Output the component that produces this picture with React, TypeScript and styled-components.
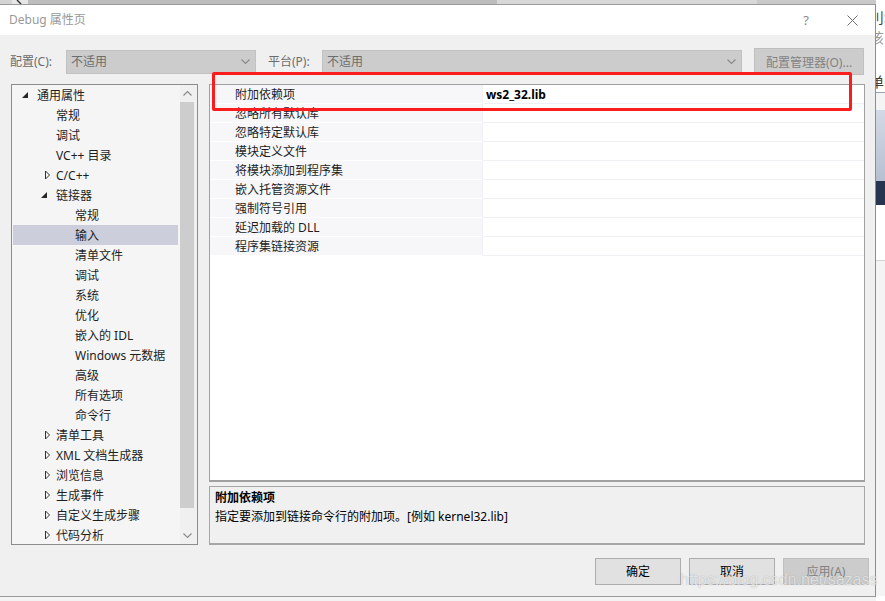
import React from "react";
import styled, { createGlobalStyle } from "styled-components";

const GlobalStyle = createGlobalStyle`
	html, body {
		margin: 0;
		padding: 0;
		background: #ffffff;
	}
	body {
		font-family: "Noto Sans", "Noto Sans CJK SC", sans-serif;
		font-size: 12px;
		color: #1e1e1e;
	}
	* {
		box-sizing: border-box;
	}
`;

const TREE = [
	{ label: "通用属性", level: 0, arrow: "open" },
	{ label: "常规", level: 1 },
	{ label: "调试", level: 1 },
	{ label: "VC++ 目录", level: 1 },
	{ label: "C/C++", level: 1, arrow: "closed" },
	{ label: "链接器", level: 1, arrow: "open" },
	{ label: "常规", level: 2 },
	{ label: "输入", level: 2, selected: true },
	{ label: "清单文件", level: 2 },
	{ label: "调试", level: 2 },
	{ label: "系统", level: 2 },
	{ label: "优化", level: 2 },
	{ label: "嵌入的 IDL", level: 2 },
	{ label: "Windows 元数据", level: 2 },
	{ label: "高级", level: 2 },
	{ label: "所有选项", level: 2 },
	{ label: "命令行", level: 2 },
	{ label: "清单工具", level: 1, arrow: "closed" },
	{ label: "XML 文档生成器", level: 1, arrow: "closed" },
	{ label: "浏览信息", level: 1, arrow: "closed" },
	{ label: "生成事件", level: 1, arrow: "closed" },
	{ label: "自定义生成步骤", level: 1, arrow: "closed" },
	{ label: "代码分析", level: 1, arrow: "closed" },
];

const PROPS = [
	{ name: "附加依赖项", value: "ws2_32.lib" },
	{ name: "忽略所有默认库", value: "" },
	{ name: "忽略特定默认库", value: "" },
	{ name: "模块定义文件", value: "" },
	{ name: "将模块添加到程序集", value: "" },
	{ name: "嵌入托管资源文件", value: "" },
	{ name: "强制符号引用", value: "" },
	{ name: "延迟加载的 DLL", value: "" },
	{ name: "程序集链接资源", value: "" },
];

const Chevron = ({ up = false }: { up?: boolean }) => (
	<svg width="9" height="5" viewBox="0 0 9 5">
		<polyline
			points={up ? "0.5,4.5 4.5,0.5 8.5,4.5" : "0.5,0.5 4.5,4.5 8.5,0.5"}
			fill="none"
			stroke="#8a8a8a"
			strokeWidth="1.1"
		/>
	</svg>
);

const TreeArrow = ({ kind }: { kind?: string }) => {
	if (!kind) return null;
	return (
		<svg width="10" height="10" viewBox="0 0 10 10">
			{kind === "open" ? (
				<polygon points="6,2 6,8 0,8" fill="#262626" />
			) : (
				<polygon
					points="4.5,1 8.5,5 4.5,9"
					fill="none"
					stroke="#333"
					strokeWidth="1"
				/>
			)}
		</svg>
	);
};

const App = () => {
	return (
		<Screen>
			<GlobalStyle />
			<LeftSide>
				<TopStrip>
					<TopSeg $w={12} $bg="#d4d4d4" />
					<TopSeg $w={16} $bg="#e6e6e6">
						<svg width="16" height="4" viewBox="0 0 16 4">
							<line x1="5" y1="0" x2="9" y2="4" stroke="#333" strokeWidth="1.4" />
						</svg>
					</TopSeg>
					<TopSeg $w={469} $bg="#bdbdbd" />
					<TopSeg $w={260} $bg="#d8d8d8" />
					<TopSeg $w={119} $bg="#c9c9c9" />
				</TopStrip>
				<Dialog>
					<TitleBar>
						<TitleText>Debug 属性页</TitleText>
						<TitleButton>?</TitleButton>
						<TitleButton>
							<svg width="11" height="11" viewBox="0 0 11 11">
								<line x1="0.5" y1="0.5" x2="10.5" y2="10.5" stroke="#6f6f6f" strokeWidth="1" />
								<line x1="10.5" y1="0.5" x2="0.5" y2="10.5" stroke="#6f6f6f" strokeWidth="1" />
							</svg>
						</TitleButton>
					</TitleBar>
					<Body>
						<ConfigRow>
							<FieldLabel $w={56}>配置(C):</FieldLabel>
							<Combo $w={190}>
								<span>不适用</span>
								<Chevron />
							</Combo>
							<FieldLabel $w={54} $gap={12}>
								平台(P):
							</FieldLabel>
							<Combo $w={420}>
								<span>不适用</span>
								<Chevron />
							</Combo>
							<ManagerButton>配置管理器(O)...</ManagerButton>
						</ConfigRow>
						<Main>
							<Tree>
								<TreeList>
									{TREE.map((item, idx) => (
										<TreeRow
											key={idx}
											$level={item.level}
											$selected={!!item.selected}
										>
											<ArrowSlot>
												<TreeArrow kind={item.arrow} />
											</ArrowSlot>
											<TreeLabel>{item.label}</TreeLabel>
										</TreeRow>
									))}
								</TreeList>
								<ScrollBar>
									<ScrollArrow>
										<Chevron up />
									</ScrollArrow>
									<ScrollThumb />
									<ScrollTrack />
									<ScrollArrow>
										<Chevron />
									</ScrollArrow>
								</ScrollBar>
							</Tree>
							<RightCol>
								<Grid>
									{PROPS.map((p, idx) => (
										<PropRow key={idx}>
											<GutterCell />
											<NameCell>{p.name}</NameCell>
											<ValueCell $bold={!!p.value}>{p.value}</ValueCell>
										</PropRow>
									))}
								</Grid>
								<Desc>
									<DescTitle>附加依赖项</DescTitle>
									<DescText>指定要添加到链接命令行的附加项。[例如 kernel32.lib]</DescText>
								</Desc>
							</RightCol>
						</Main>
						<Footer>
							<DlgButton>确定</DlgButton>
							<DlgButton>取消</DlgButton>
							<DlgButton $disabled>应用(A)</DlgButton>
						</Footer>
					</Body>
				</Dialog>
				<BottomStrip />
			</LeftSide>
			<RightStrip>
				<StripText $color="#3a3a3a" $top={8}>刂S</StripText>
				<StripText $color="#9a9a9a" $top={0}>该</StripText>
				<StripBlock $h={24} $bg="#ffffff" />
				<StripText $color="#3a3a3a" $top={0}>单的</StripText>
				<StripBlock $h={1} $bg="#9aa3b0" />
				<StripBlock $h={17} $bg="#f4f4f4" />
				<StripGradient />
				<StripBlock $h={24} $bg="#26344f" />
				<StripBlock $h={55} $bg="#ffffff" />
				<StripBlock $h={1} $bg="#d2d2d2" />
				<StripBlock $h={335} $bg="#f4f4f4" />
			</RightStrip>
			<RedBox />
			<Watermark>https://blog.csdn.net/sazass</Watermark>
		</Screen>
	);
};

export default App;

const Screen = styled.div`
	position: relative;
	width: 885px;
	height: 601px;
	display: flex;
	overflow: hidden;
	background: #f0f0f0;
`;

const LeftSide = styled.div`
	width: 876px;
	display: flex;
	flex-direction: column;
`;

const TopStrip = styled.div`
	height: 4px;
	display: flex;
	background: #c6c6c6;
`;

const TopSeg = styled.div<{ $w: number; $bg: string }>`
	width: ${(p) => p.$w}px;
	height: 4px;
	background: ${(p) => p.$bg};
	display: flex;
	svg {
		display: block;
	}
`;

const Dialog = styled.div`
	height: 593px;
	display: flex;
	flex-direction: column;
	background: #f0f0f0;
	border-top: 1px solid #9b9b9b;
	border-right: 1px solid #8d8d8d;
	border-bottom: 1px solid #9b9b9b;
`;

const TitleBar = styled.div`
	height: 30px;
	display: flex;
	align-items: center;
	background: #ffffff;
	padding-left: 9px;
	color: #999999;
`;

const TitleText = styled.div`
	flex: 1;
	font-size: 12px;
	line-height: 16px;
`;

const TitleButton = styled.div`
	width: 46px;
	height: 30px;
	display: flex;
	align-items: center;
	justify-content: center;
	font-size: 13px;
	color: #8a8a8a;
`;

const Body = styled.div`
	flex: 1;
	display: flex;
	flex-direction: column;
	padding: 13px 0 11px 0;
`;

const ConfigRow = styled.div`
	height: 27px;
	display: flex;
	align-items: center;
	padding-left: 10px;
`;

const FieldLabel = styled.div<{ $w: number; $gap?: number }>`
	width: ${(p) => p.$w}px;
	margin-left: ${(p) => p.$gap || 0}px;
	color: #6d6d6d;
	line-height: 16px;
	white-space: nowrap;
`;

const Combo = styled.div<{ $w: number }>`
	width: ${(p) => p.$w}px;
	height: 24px;
	display: flex;
	align-items: center;
	justify-content: space-between;
	padding: 0 5px 0 4px;
	background: #cccccc;
	border: 1px solid #c2c2c2;
	color: #6d6d6d;
	line-height: 16px;
	svg {
		display: block;
	}
`;

const ManagerButton = styled.div`
	margin-left: 12px;
	width: 110px;
	height: 27px;
	display: flex;
	align-items: center;
	justify-content: center;
	background: #cccccc;
	border: 1px solid #bfbfbf;
	color: #838383;
	white-space: nowrap;
`;

const Main = styled.div`
	margin-top: 9px;
	height: 461px;
	display: grid;
	grid-template-columns: 187px 656px;
	column-gap: 11px;
	padding-left: 11px;
`;

const Tree = styled.div`
	display: flex;
	background: #f5f5f5;
	border: 1px solid #8c8c8c;
	overflow: hidden;
`;

const TreeList = styled.div`
	flex: 1;
	padding: 0 2px 0 1px;
	overflow: hidden;
`;

const TreeRow = styled.div<{ $level: number; $selected: boolean }>`
	height: 20px;
	display: flex;
	align-items: center;
	padding-left: ${(p) => 7 + p.$level * 19}px;
	background: ${(p) => (p.$selected ? "#cccedb" : "transparent")};
	white-space: nowrap;
	color: #1e1e1e;
`;

const TreeLabel = styled.span`
	line-height: 16px;
	padding-top: 2px;
`;

const ArrowSlot = styled.div`
	width: 17px;
	height: 20px;
	flex-shrink: 0;
	display: flex;
	align-items: center;
	padding-left: 2px;
	svg {
		display: block;
	}
`;

const ScrollBar = styled.div`
	width: 17px;
	display: flex;
	flex-direction: column;
	background: #f0f0f0;
`;

const ScrollArrow = styled.div`
	height: 17px;
	display: flex;
	align-items: center;
	justify-content: center;
	padding-right: 3px;
	svg {
		display: block;
	}
`;

const ScrollThumb = styled.div`
	height: 406px;
	margin-right: 3px;
	background: #cdcdcd;
`;

const ScrollTrack = styled.div`
	flex: 1;
`;

const RightCol = styled.div`
	display: flex;
	flex-direction: column;
	gap: 4px;
`;

const Grid = styled.div`
	height: 398px;
	background: #ffffff;
	border: 1px solid #a0a0a0;
	border-bottom-width: 2px;
`;

const PropRow = styled.div`
	height: 19px;
	display: grid;
	grid-template-columns: 21px 252px 1fr;
`;

const GutterCell = styled.div`
	background: #f7f7f9;
	border-bottom: 1px solid #ffffff;
`;

const NameCell = styled.div`
	padding: 2px 0 0 4px;
	background: #f7f7f9;
	border-bottom: 1px solid #ffffff;
	border-right: 1px solid #eef0f5;
	line-height: 16px;
	white-space: nowrap;
`;

const ValueCell = styled.div<{ $bold: boolean }>`
	padding: 2px 0 0 3px;
	border-bottom: 1px solid #eef0f5;
	font-weight: ${(p) => (p.$bold ? 700 : 400)};
	color: #000000;
	line-height: 16px;
`;

const Desc = styled.div`
	height: 59px;
	display: flex;
	flex-direction: column;
	padding: 1px 5px 0 5px;
	background: #f0f0f0;
	border: 1px solid #a6a6a6;
	border-bottom-width: 2px;
`;

const DescTitle = styled.div`
	font-weight: 700;
	line-height: 20px;
	color: #000000;
`;

const DescText = styled.div`
	line-height: 18px;
	color: #000000;
`;

const Footer = styled.div`
	margin-top: 13px;
	height: 27px;
	display: flex;
	justify-content: flex-end;
	gap: 8px;
	padding-right: 6px;
`;

const DlgButton = styled.div<{ $disabled?: boolean }>`
	width: 86px;
	height: 27px;
	display: flex;
	align-items: center;
	justify-content: center;
	background: ${(p) => (p.$disabled ? "#cccccc" : "#e1e1e1")};
	border: 1px solid ${(p) => (p.$disabled ? "#bfbfbf" : "#adadad")};
	color: ${(p) => (p.$disabled ? "#838383" : "#000000")};
	line-height: 16px;
`;

const BottomStrip = styled.div`
	flex: 1;
	background: #f3f3f3;
`;

const RightStrip = styled.div`
	flex: 1;
	display: flex;
	flex-direction: column;
	background: #ffffff;
	overflow: hidden;
`;

const StripText = styled.div<{ $color: string; $top: number }>`
	margin-top: ${(p) => p.$top}px;
	margin-left: -6px;
	height: 20px;
	font-size: 14px;
	line-height: 20px;
	color: ${(p) => p.$color};
	white-space: nowrap;
`;

const StripBlock = styled.div<{ $h: number; $bg: string }>`
	height: ${(p) => p.$h}px;
	flex-shrink: 0;
	background: ${(p) => p.$bg};
`;

const StripGradient = styled.div`
	height: 71px;
	flex-shrink: 0;
	background: linear-gradient(#d3d9e5, #b7c0d2);
`;

const RedBox = styled.div`
	position: absolute;
	left: 212px;
	top: 72px;
	width: 640px;
	height: 39px;
	border: 3px solid #fb1d1d;
	border-radius: 2px;
	pointer-events: none;
`;

const Watermark = styled.div`
	position: absolute;
	left: 680px;
	top: 571px;
	font-family: "Liberation Sans", Arial, sans-serif;
	font-size: 16px;
	line-height: 18px;
	color: rgba(255, 255, 255, 0.7);
	text-shadow: 0 0 1px rgba(0, 0, 0, 0.3);
	white-space: nowrap;
	pointer-events: none;
`;
